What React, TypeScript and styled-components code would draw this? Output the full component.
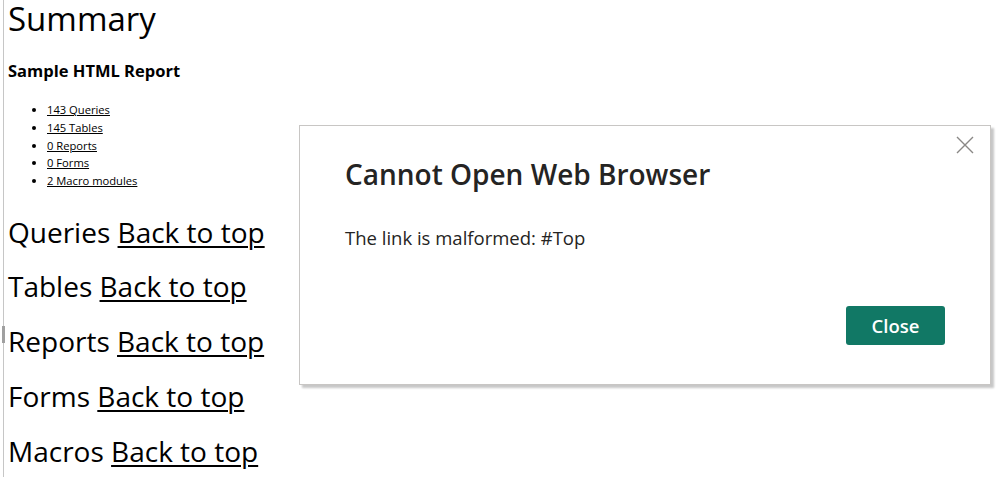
import React from "react";
import styled, { createGlobalStyle } from "styled-components";

const Global = createGlobalStyle`
  html, body { margin: 0; padding: 0; background: #ffffff; }
  body { width: 1008px; height: 477px; overflow: hidden; font-family: "Open Sans", "Noto Sans", sans-serif; }
`;

const Frame = styled.div`
  position: relative;
  width: 1008px;
  height: 477px;
`;

const Page = styled.main`
  margin-left: 3px;
  height: 477px;
  border-left: 1px solid #c6c6c6;
  padding-left: 4px;
  color: #000;
  font-family: "Open Sans", sans-serif;
`;

const Title = styled.h1`
  margin: 0;
  font-size: 33px;
  font-weight: 400;
  line-height: 38px;
`;

const Subtitle = styled.h2`
  margin: 23px 0 0 0;
  font-size: 16.5px;
  font-weight: 700;
  line-height: 20px;
`;

const List = styled.ul`
  margin: 20px 0 0 0;
  padding-left: 39px;
  font-size: 11.2px;
  line-height: 17.75px;
`;

const Item = styled.li`
  &::marker { font-size: 11px; }
`;

const SmallLink = styled.a`
  color: #000;
  text-decoration: underline;
`;

const Sections = styled.div`
  margin-top: 15px;
`;

const Section = styled.h3`
  margin: 0;
  font-size: 28px;
  font-weight: 400;
  line-height: 54.7px;
`;

const BigLink = styled.a`
  color: #000;
  text-decoration: underline;
  text-decoration-thickness: 2px;
  text-underline-offset: 3px;
`;

const Handle = styled.div`
  position: absolute;
  left: 2px;
  top: 326px;
  width: 3px;
  height: 17px;
  background: #a0a0a0;
`;

const Dialog = styled.div`
  position: absolute;
  left: 299px;
  top: 125px;
  box-sizing: border-box;
  width: 692px;
  height: 260px;
  border: 1px solid #c8c6c4;
  background: #fff;
  box-shadow: 3px 3px 2px rgba(0, 0, 0, 0.22);
  display: flex;
  flex-direction: column;
  padding: 0 45px;
  font-family: "Open Sans", sans-serif;
  color: #252423;
`;

const DialogTitle = styled.h2`
  margin: 30px 0 0 0;
  font-size: 28px;
  font-weight: 600;
  line-height: 36px;
`;

const DialogBody = styled.p`
  margin: 33.6px 0 0 0;
  font-size: 18.5px;
  line-height: 24px;
`;

const Footer = styled.div`
  margin-top: auto;
  margin-bottom: 39px;
  display: flex;
  justify-content: flex-end;
`;

const PrimaryButton = styled.button`
  width: 99px;
  height: 39px;
  border: none;
  border-radius: 3px;
  background: #117865;
  color: #fff;
  font-family: "Open Sans", sans-serif;
  font-size: 18.5px;
  font-weight: 600;
  cursor: pointer;
`;

const CloseX = styled.button`
  position: absolute;
  right: 14px;
  top: 8px;
  width: 22px;
  height: 22px;
  padding: 0;
  border: none;
  background: transparent;
  display: flex;
  align-items: center;
  justify-content: center;
`;

const sections = ["Queries", "Tables", "Reports", "Forms", "Macros"];

export default function App() {
  return (
    <Frame>
      <Global />
      <Page>
        <Title>Summary</Title>
        <Subtitle>Sample HTML Report</Subtitle>
        <List>
          <Item><SmallLink href="#q">143 Queries</SmallLink></Item>
          <Item><SmallLink href="#t">145 Tables</SmallLink></Item>
          <Item><SmallLink href="#r">0 Reports</SmallLink></Item>
          <Item><SmallLink href="#f">0 Forms</SmallLink></Item>
          <Item><SmallLink href="#m">2 Macro modules</SmallLink></Item>
        </List>
        <Sections>
          {sections.map((s) => (
            <Section key={s}>
              {s} <BigLink href="#Top">Back to top</BigLink>
            </Section>
          ))}
        </Sections>
      </Page>
      <Handle />
      <Dialog role="dialog">
        <CloseX aria-label="Close">
          <svg width="18" height="18" viewBox="0 0 18 18">
            <path d="M1 1 L17 17 M17 1 L1 17" stroke="#8a8886" strokeWidth="1.4" fill="none" />
          </svg>
        </CloseX>
        <DialogTitle>Cannot Open Web Browser</DialogTitle>
        <DialogBody>The link is malformed: #Top</DialogBody>
        <Footer>
          <PrimaryButton>Close</PrimaryButton>
        </Footer>
      </Dialog>
    </Frame>
  );
}
